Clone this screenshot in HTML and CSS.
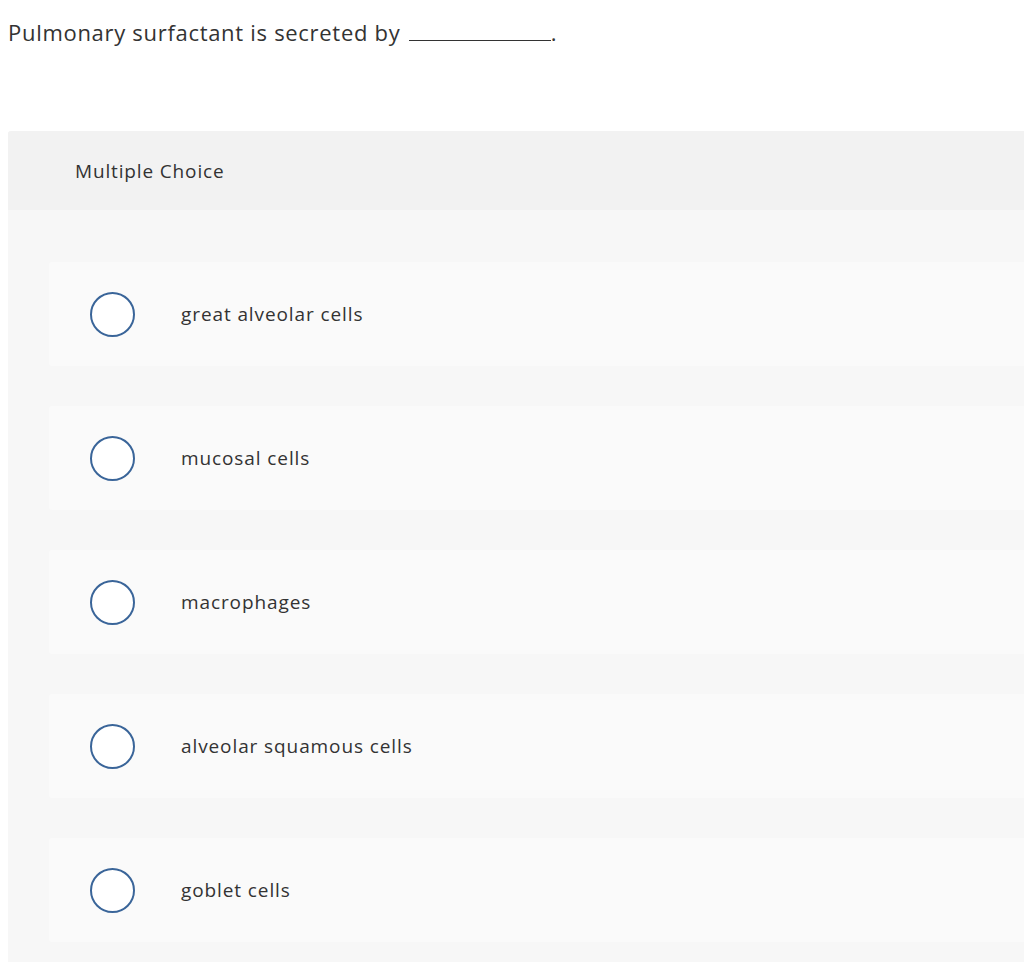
FILE: index.html
```html
<!DOCTYPE html>
<html>
<head>
<meta charset="utf-8">
<link rel="stylesheet" href="styles.css">
</head>
<body>
<div class="page">
  <p class="question">Pulmonary surfactant is secreted by <span class="blank"></span>.</p>
  <div class="panel">
    <div class="panel-head">Multiple Choice</div>
    <div class="panel-body">
      <div class="option"><span class="radio"></span><span class="label">great alveolar cells</span></div>
      <div class="option"><span class="radio"></span><span class="label">mucosal cells</span></div>
      <div class="option"><span class="radio"></span><span class="label">macrophages</span></div>
      <div class="option"><span class="radio"></span><span class="label">alveolar squamous cells</span></div>
      <div class="option"><span class="radio"></span><span class="label">goblet cells</span></div>
    </div>
  </div>
</div>
</body>
</html>
```
FILE: styles.css
```css
html, body {
  margin: 0;
  padding: 0;
  overflow: hidden;
  background: #fff;
}
.page {
  padding-left: 8px;
  font-family: "Open Sans", Lato, sans-serif;
  color: #333;
}
.question {
  margin: 0;
  padding-top: 17px;
  font-size: 22px;
  line-height: 30px;
  height: 114px;
  letter-spacing: 0.7px;
}
.blank {
  display: inline-block;
  width: 142px;
  border-bottom: 1px solid #333;
  vertical-align: baseline;
  margin-left: 2px;
}
.panel {
  width: 1060px;
  background: #f7f7f7;
  border-radius: 3px 0 0 0;
}
.panel-head {
  height: 79px;
  background: #f2f2f2;
  border-radius: 3px 0 0 0;
  display: flex;
  align-items: center;
  padding-left: 67px;
  font-size: 19px;
  letter-spacing: 0.85px;
}
.panel-body {
  padding: 52px 0 40px 41px;
  display: flex;
  flex-direction: column;
  gap: 40px;
}
.option {
  height: 104px;
  background: #fafafa;
  border-radius: 3px 0 0 3px;
  display: flex;
  align-items: center;
  padding-left: 41px;
}
.radio {
  width: 41px;
  height: 41px;
  border: 2px solid #3a6599;
  border-radius: 50%;
  background: #fff;
  flex: none;
}
.label {
  margin-left: 46px;
  font-size: 19px;
  letter-spacing: 0.9px;
}
```
